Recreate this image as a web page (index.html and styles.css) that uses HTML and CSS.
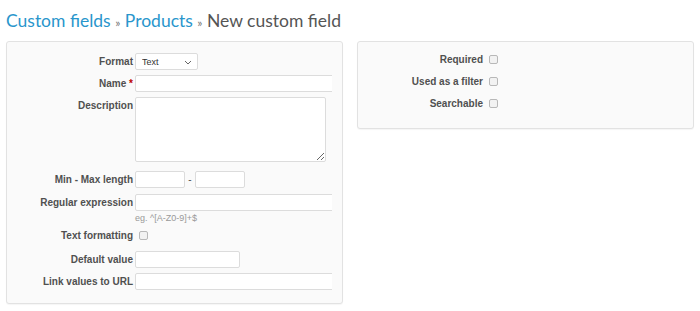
FILE: index.html
```html
<html lang="en">
<head>
<meta charset="utf-8">
<title>New custom field</title>
<link rel="stylesheet" href="styles.css">
</head>
<body>
<div id="content">
    <h2 class="title">
        <a href="#">Custom fields</a> <span class="sep">&raquo;</span>
        <a href="#">Products</a> <span class="sep">&raquo;</span>
        New custom field
    </h2>
    <div class="split">
        <div class="box left">
            <div class="row">
                <label>Format</label>
                <div class="select-wrap">
                    <select class="select"><option>Text</option></select>
                    <!-- chevron -->
                    <svg class="chevron" width="8" height="5" viewBox="0 0 8 5"><path d="M1 1 L4 4 L7 1" fill="none" stroke="#666" stroke-width="1"/></svg>
                </div>
            </div>
            <div class="row">
                <label>Name <span class="required">*</span></label>
                <div class="clip"><input type="text" class="wide"></div>
            </div>
            <div class="row row-desc">
                <label>Description</label>
                <textarea class="textarea"></textarea>
            </div>
            <div class="row row-minmax">
                <label>Min - Max length</label>
                <input type="text" class="short">
                <span class="dash">-</span>
                <input type="text" class="short">
            </div>
            <div class="row row-regex">
                <label>Regular expression</label>
                <div class="field">
                    <div class="clip"><input type="text" class="wide"></div>
                    <em class="info">eg. ^[A-Z0-9]+$</em>
                </div>
            </div>
            <div class="row row-check">
                <label>Text formatting</label>
                <input type="checkbox" class="check">
            </div>
            <div class="row">
                <label>Default value</label>
                <input type="text" class="medium">
            </div>
            <div class="row">
                <label>Link values to URL</label>
                <div class="clip"><input type="text" class="wide"></div>
            </div>
        </div>
        <div class="box right">
            <div class="row row-check">
                <label>Required</label>
                <input type="checkbox" class="check">
            </div>
            <div class="row row-check">
                <label>Used as a filter</label>
                <input type="checkbox" class="check">
            </div>
            <div class="row row-check">
                <label>Searchable</label>
                <input type="checkbox" class="check">
            </div>
        </div>
    </div>
</div>
</body>
</html>
```

FILE: styles.css
```css
body {
    margin: 0;
    padding: 0;
    background-color: #fff;
    font-family: "Liberation Sans", Arial, sans-serif;
    color: #505050;
}
#content {
    padding: 0 6px;
}
h2.title {
    font-family: Lato, "Liberation Sans", sans-serif;
    font-weight: normal;
    font-size: 17.5px;
    color: #555;
    margin: 0;
    padding: 11px 0 0 0;
    height: 30px;
    box-sizing: border-box;
    line-height: 20px;
}
h2.title a {
    color: #2996cc;
    text-decoration: none;
}
h2.title .sep {
    font-size: 12px;
    color: #777;
}
.split {
    display: flex;
    justify-content: space-between;
    align-items: flex-start;
    margin-top: 11px;
}
.box {
    width: 337px;
    box-sizing: border-box;
    background-color: #fafafa;
    border: 1px solid #e2e2e2;
    border-radius: 3px;
    box-shadow: 0 1px 1px rgba(0, 0, 0, 0.04);
}
.box.left {
    padding: 11px 0 13px 0;
}
.box.right {
    padding: 9px 0 17px 0;
}
.row {
    display: flex;
    align-items: flex-start;
    margin-bottom: 5px;
}
.row:last-child {
    margin-bottom: 0;
}
.row label {
    width: 126px;
    flex: none;
    text-align: right;
    font-size: 10px;
    font-weight: bold;
    line-height: 13px;
    padding-top: 2px;
    margin-right: 2px;
}
.box.right .row label {
    width: 125px;
}
.required {
    color: #bb0000;
}
input[type="text"], textarea, .select {
    box-sizing: border-box;
    border: 1px solid #dcdcdc;
    border-radius: 2px;
    background: #fff;
    height: 17px;
    margin: 0;
    padding: 0 4px;
    font-family: "Liberation Sans", Arial, sans-serif;
    font-size: 10px;
    outline: none;
}
.select-wrap {
    position: relative;
    width: 63px;
}
.select {
    -webkit-appearance: none;
    appearance: none;
    width: 63px;
    height: 17px;
    padding: 0 6px;
    color: #333;
    font-size: 9px;
}
.chevron {
    position: absolute;
    right: 6px;
    top: 7px;
}
.clip {
    width: 197px;
    overflow: hidden;
}
.wide {
    width: 210px;
}
.textarea {
    width: 191px;
    height: 65px;
    resize: both;
}
.row-desc {
    margin-bottom: 9px;
}
.short {
    width: 50px;
}
.dash {
    font-size: 10px;
    width: 10px;
    text-align: center;
    line-height: 17px;
}
.row-minmax {
    margin-bottom: 6px;
}
.medium {
    width: 105px;
}
.field {
    display: flex;
    flex-direction: column;
}
.info {
    font-style: normal;
    font-size: 9px;
    color: #999;
    margin-top: 2px;
    line-height: 11px;
}
.row-regex {
    margin-bottom: 3px;
}
.row-check {
    height: 16px;
    margin-bottom: 6px;
}
.box.left .row-check {
    margin-bottom: 8px;
}
.check {
    -webkit-appearance: none;
    appearance: none;
    width: 9px;
    height: 9px;
    box-sizing: border-box;
    border: 1px solid #b8b8b8;
    border-radius: 2px;
    background: #f2f2f2;
    margin: 4px 0 0 4px;
}
```
